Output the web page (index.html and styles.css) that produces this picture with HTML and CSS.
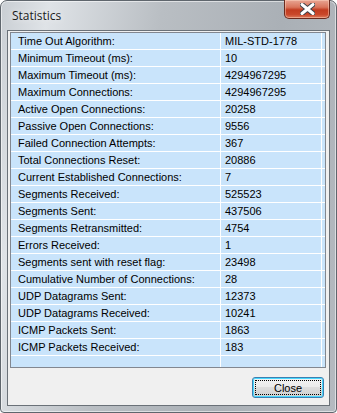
FILE: index.html
```html
<!DOCTYPE html>
<html lang="en">

<head>
    <meta charset="UTF-8">
    <meta name="viewport" content="width=device-width, initial-scale=1.0">
    <title>Statistics</title>
    <link rel="stylesheet" href="styles.css">
</head>

<body>

    <div class="window">
        <div class="titlebar">
            <span class="title">Statistics</span>
            <div class="close-x">
                <svg width="15" height="12" viewBox="0 0 15 12">
                    <path d="M2 1.5 L13 10.5 M13 1.5 L2 10.5" stroke="#3a3f46" stroke-width="5" stroke-linecap="round"/>
                    <path d="M2 1.5 L13 10.5 M13 1.5 L2 10.5" stroke="#ffffff" stroke-width="3" stroke-linecap="round"/>
                </svg>
            </div>
        </div>

        <div class="client">
            <div class="list">
                <div class="row"><div class="cell">Time Out Algorithm:</div><div class="cell">MIL-STD-1778</div><div class="cell"></div></div>
                <div class="row"><div class="cell">Minimum Timeout (ms):</div><div class="cell">10</div><div class="cell"></div></div>
                <div class="row"><div class="cell">Maximum Timeout (ms):</div><div class="cell">4294967295</div><div class="cell"></div></div>
                <div class="row"><div class="cell">Maximum Connections:</div><div class="cell">4294967295</div><div class="cell"></div></div>
                <div class="row"><div class="cell">Active Open Connections:</div><div class="cell">20258</div><div class="cell"></div></div>
                <div class="row"><div class="cell">Passive Open Connections:</div><div class="cell">9556</div><div class="cell"></div></div>
                <div class="row"><div class="cell">Failed Connection Attempts:</div><div class="cell">367</div><div class="cell"></div></div>
                <div class="row"><div class="cell">Total Connections Reset:</div><div class="cell">20886</div><div class="cell"></div></div>
                <div class="row"><div class="cell">Current Established Connections:</div><div class="cell">7</div><div class="cell"></div></div>
                <div class="row"><div class="cell">Segments Received:</div><div class="cell">525523</div><div class="cell"></div></div>
                <div class="row"><div class="cell">Segments Sent:</div><div class="cell">437506</div><div class="cell"></div></div>
                <div class="row"><div class="cell">Segments Retransmitted:</div><div class="cell">4754</div><div class="cell"></div></div>
                <div class="row"><div class="cell">Errors Received:</div><div class="cell">1</div><div class="cell"></div></div>
                <div class="row"><div class="cell">Segments sent with reset flag:</div><div class="cell">23498</div><div class="cell"></div></div>
                <div class="row"><div class="cell">Cumulative Number of Connections:</div><div class="cell">28</div><div class="cell"></div></div>
                <div class="row"><div class="cell">UDP Datagrams Sent:</div><div class="cell">12373</div><div class="cell"></div></div>
                <div class="row"><div class="cell">UDP Datagrams Received:</div><div class="cell">10241</div><div class="cell"></div></div>
                <div class="row"><div class="cell">ICMP Packets Sent:</div><div class="cell">1863</div><div class="cell"></div></div>
                <div class="row"><div class="cell">ICMP Packets Received:</div><div class="cell">183</div><div class="cell"></div></div>
                <div class="row empty"><div class="cell"></div><div class="cell"></div><div class="cell"></div></div>
            </div>

            <div class="footer">
                <button class="close-btn">Close</button>
            </div>
        </div>
    </div>

</body>

</html>
```

FILE: styles.css
```css
* {
    box-sizing: border-box;
    margin: 0;
    padding: 0;
}

body {
    width: 337px;
    height: 413px;
    background: #ffffff;
    overflow: hidden;
}

.window {
    width: 337px;
    height: 413px;
    display: flex;
    flex-direction: column;
    border: 1px solid #5f666d;
    border-radius: 7px 7px 4px 4px;
    background: linear-gradient(100deg, #c9ced3 0%, #dfe3e7 12%, #b9bec3 40%, #aab0b6 70%, #b5bac0 100%);
    box-shadow: inset 0 0 0 1px rgba(255, 255, 255, 0.55);
}

.titlebar {
    height: 29px;
    display: flex;
    justify-content: space-between;
    align-items: flex-start;
    padding-left: 11px;
    padding-right: 6px;
}

.title {
    font-family: "Open Sans", "DejaVu Sans", sans-serif;
    font-size: 12px;
    color: #1b1b1b;
    margin-top: 6px;
    text-shadow: 0 0 6px rgba(255, 255, 255, 0.9);
}

.close-x {
    width: 46px;
    height: 19px;
    margin-top: -1px;
    display: flex;
    align-items: center;
    justify-content: center;
    border: 1px solid #6a2a1e;
    border-top: none;
    border-radius: 0 0 5px 5px;
    background: linear-gradient(#e8a593 0%, #d9755c 40%, #c23c20 55%, #c9472a 80%, #dd7a5c 100%);
    box-shadow: inset 0 0 0 1px rgba(255, 220, 200, 0.45);
}

.client {
    flex: 1;
    margin: 0 6px 6px 6px;
    background: #f0f0f0;
    border: 1px solid #6a7178;
    display: flex;
    flex-direction: column;
    padding: 1px 3px 0 2px;
}

.list {
    height: 336px;
    border: 1px solid #828790;
    background: #c9e4fb;
    overflow: hidden;
    font-family: "Liberation Sans", Arial, sans-serif;
    font-size: 11px;
    color: #000;
}

.row {
    display: grid;
    grid-template-columns: 210px 101px 1fr;
    height: 17px;
    border-bottom: 1px solid #ffffff;
}

.cell {
    border-right: 1px solid #ffffff;
    padding-left: 7px;
    line-height: 17px;
    white-space: nowrap;
}

.row .cell:nth-child(2) {
    padding-left: 4px;
}

.row .cell:last-child {
    border-right: none;
}

.row.empty {
    border-bottom: none;
}

.footer {
    display: flex;
    justify-content: flex-end;
    padding: 9px 2px 0 0;
}

.close-btn {
    width: 72px;
    height: 21px;
    font-family: "Liberation Sans", Arial, sans-serif;
    font-size: 11px;
    color: #000;
    border: 1px solid #3c7fb1;
    border-radius: 3px;
    background: linear-gradient(#f2f2f2 0%, #ebebeb 45%, #dddddd 50%, #cfcfcf 100%);
    box-shadow: inset 0 0 0 1px #48d8ff;
    outline: 1px dotted #000;
    outline-offset: -4px;
}
```
